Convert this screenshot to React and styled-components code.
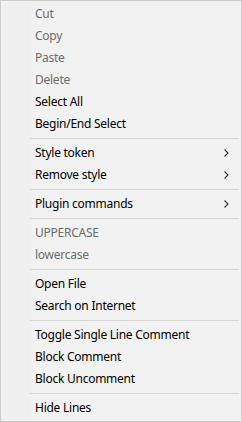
import React from 'react'
import styled, { createGlobalStyle } from 'styled-components'

const Global = createGlobalStyle`
  html, body {
    margin: 0;
    padding: 0;
    background: #ffffff;
  }
`

const Menu = styled.div`
  width: 242px;
  height: 422px;
  box-sizing: border-box;
  border: 1px solid #cccccc;
  padding: 2px 0;
  background: linear-gradient(to right, #f0f0f0 30px, #f2f2f2 30px);
  font-family: "Noto Sans", "Open Sans", sans-serif;
  font-size: 12px;
  color: #000;
`

const Item = styled.div`
  display: flex;
  align-items: center;
  justify-content: space-between;
  height: 22px;
  box-sizing: border-box;
  padding: 0 12px 1px 34px;
  color: ${p => (p.disabled ? '#6d6d6d' : '#000000')};
  white-space: nowrap;
`

const Label = styled.span`
  letter-spacing: -0.25px;
`

const Separator = styled.div`
  height: 7px;
  display: flex;
  align-items: center;
  padding: 0 2px 0 29px;

  &::after {
    content: '';
    flex: 1;
    height: 1px;
    background: #d7d7d7;
  }
`

const Chevron = () => (
  <svg width="5" height="8" viewBox="0 0 5 8">
    <polyline points="0.5,0.5 4,4 0.5,7.5" fill="none" stroke="#333" strokeWidth="1.1" />
  </svg>
)

const entries = [
  { label: 'Cut', disabled: true },
  { label: 'Copy', disabled: true },
  { label: 'Paste', disabled: true },
  { label: 'Delete', disabled: true },
  { label: 'Select All' },
  { label: 'Begin/End Select' },
  '-',
  { label: 'Style token', sub: true },
  { label: 'Remove style', sub: true },
  '-',
  { label: 'Plugin commands', sub: true },
  '-',
  { label: 'UPPERCASE', disabled: true },
  { label: 'lowercase', disabled: true },
  '-',
  { label: 'Open File' },
  { label: 'Search on Internet' },
  '-',
  { label: 'Toggle Single Line Comment' },
  { label: 'Block Comment' },
  { label: 'Block Uncomment' },
  '-',
  { label: 'Hide Lines' },
]

const App = () => {
  return (
    <>
      <Global />
      <Menu>
        {entries.map((e, i) =>
          e === '-' ? (
            <Separator key={i} />
          ) : (
            <Item key={i} disabled={e.disabled}>
              <Label>{e.label}</Label>
              {e.sub && <Chevron />}
            </Item>
          )
        )}
      </Menu>
    </>
  )
}

export default App
